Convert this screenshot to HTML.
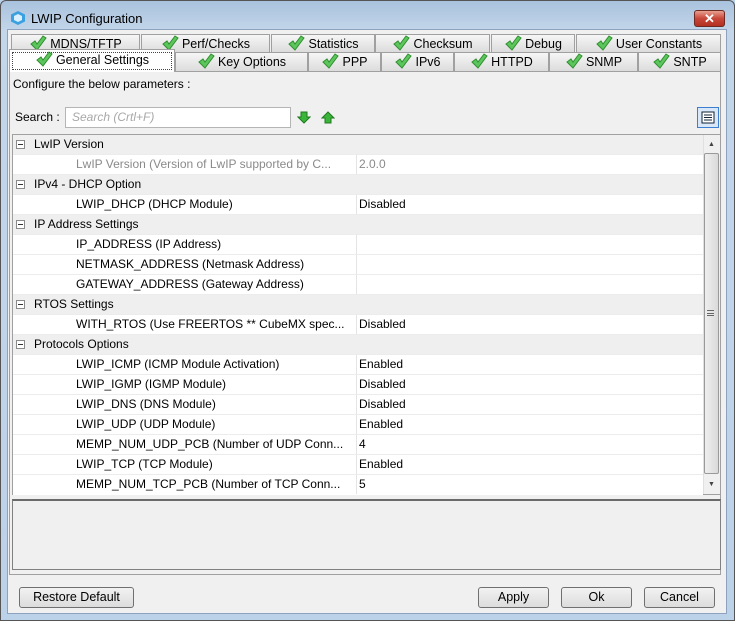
<!DOCTYPE html>
<html><head><meta charset="utf-8"><style>
*{box-sizing:border-box;margin:0;padding:0}
body{width:735px;height:621px;overflow:hidden;background:#b9d1ea;font-family:"Liberation Sans","Noto Sans CJK KR",sans-serif;font-size:12px;color:#000;position:relative}
.abs{position:absolute}
#frame{left:0;top:0;width:735px;height:621px;border:1px solid #555;border-radius:6px 6px 0 0;background:linear-gradient(#a9c2dd 0,#c3d6ea 30px,#bcd2e9 100%)}
#client{left:7px;top:29px;width:720px;height:585px;background:#f0f0f0;border:1px solid #8da3bd}
.tab{position:absolute;height:18px;border:1px solid #a0a0a0;border-bottom:none;background:linear-gradient(#f6f6f6,#dcdcdc);text-align:center;line-height:17px;font-size:12.5px;white-space:nowrap}
.tab svg{vertical-align:-3px;margin-right:3px}
.row{position:absolute;left:13px;width:690px;height:20px;line-height:19px;border-bottom:1px solid #ececec}
.g{background:#efefef}
.w{background:#fff}
.row .n{position:absolute;left:63px}
.row .v{position:absolute;left:346px}
.row .sep{position:absolute;left:343px;top:0;width:1px;height:19px;background:#e4e4e4}
.row .box{position:absolute;left:3px;top:5px;width:9px;height:9px;border:1px solid #8a8a8a;background:#fff}
.row .box:after{content:"";position:absolute;left:1px;top:3px;width:5px;height:1px;background:#333}
.row .gt{position:absolute;left:21px}
.btn{position:absolute;top:587px;height:21px;border:1px solid #707070;border-radius:3px;background:linear-gradient(#f2f2f2,#dcdcdc);text-align:center;line-height:19px;font-size:12.5px}
</style></head><body>
<div id="frame" class="abs"></div>
<svg class="abs" style="left:10px;top:10px" width="16" height="16"><polygon points="8,1 15,4.5 15,11.5 8,15 1,11.5 1,4.5" fill="#3aa0e0"/><polygon points="8,4 12,6 12,10 8,12 4,10 4,6" fill="#d8f0ff"/></svg>
<div class="abs" style="left:31px;top:11px;font-size:13px">LWIP Configuration</div>
<div class="abs" style="left:694px;top:10px;width:31px;height:17px;border:1px solid #6e2a22;border-radius:3px;background:linear-gradient(#e8a090,#c8473a 50%,#b23020);color:#fff;text-align:center;line-height:15px;font-weight:bold;font-size:13px">✕</div>
<div id="client" class="abs"></div>

<svg width="0" height="0" style="position:absolute"><defs><symbol id="ck" viewBox="0 0 18 16"><path d="M2 9 L6 6 L8 9 L14 1 L17 3 L8 15 Z" fill="#5cc65c" stroke="#2f8f2f" stroke-width="1"/></symbol></defs></svg>

<div class="tab" style="left:11px;top:34px;width:129px"><svg width="18" height="16"><use href="#ck"/></svg>MDNS/TFTP</div>
<div class="tab" style="left:141px;top:34px;width:129px"><svg width="18" height="16"><use href="#ck"/></svg>Perf/Checks</div>
<div class="tab" style="left:271px;top:34px;width:104px"><svg width="18" height="16"><use href="#ck"/></svg>Statistics</div>
<div class="tab" style="left:375px;top:34px;width:115px"><svg width="18" height="16"><use href="#ck"/></svg>Checksum</div>
<div class="tab" style="left:491px;top:34px;width:84px"><svg width="18" height="16"><use href="#ck"/></svg>Debug</div>
<div class="tab" style="left:576px;top:34px;width:145px"><svg width="18" height="16"><use href="#ck"/></svg>User Constants</div>
<div class="tab" style="left:175px;top:52px;width:133px;height:19px"><svg width="18" height="16"><use href="#ck"/></svg>Key Options</div>
<div class="tab" style="left:308px;top:52px;width:73px;height:19px"><svg width="18" height="16"><use href="#ck"/></svg>PPP</div>
<div class="tab" style="left:381px;top:52px;width:73px;height:19px"><svg width="18" height="16"><use href="#ck"/></svg>IPv6</div>
<div class="tab" style="left:454px;top:52px;width:95px;height:19px"><svg width="18" height="16"><use href="#ck"/></svg>HTTPD</div>
<div class="tab" style="left:549px;top:52px;width:89px;height:19px"><svg width="18" height="16"><use href="#ck"/></svg>SNMP</div>
<div class="tab" style="left:638px;top:52px;width:83px;height:19px"><svg width="18" height="16"><use href="#ck"/></svg>SNTP</div>
<div class="abs" style="left:9px;top:71px;width:712px;height:504px;border:1px solid #a0a0a0;background:#f0f0f0"></div>
<div class="tab" style="left:9px;top:49px;width:166px;height:23px;background:#fff;line-height:21px;border-bottom:none"><div style="position:absolute;left:2px;top:2px;right:2px;bottom:2px;border:1px dotted #444"></div><svg width="18" height="16"><use href="#ck"/></svg>General Settings</div>

<div class="abs" style="left:13px;top:77px">Configure the below parameters :</div>
<div class="abs" style="left:15px;top:110px">Search :</div>
<div class="abs" style="left:65px;top:107px;width:226px;height:21px;border:1px solid #b5b5b5;background:#fff;color:#a8a8a8;font-style:italic;padding-left:6px;line-height:19px">Search (Crtl+F)</div>
<svg class="abs" style="left:297px;top:111px" width="14" height="13"><path d="M4 1h6v5h3l-6 6-6-6h3z" fill="#3ab53a" stroke="#1f7a1f"/></svg>
<svg class="abs" style="left:321px;top:111px" width="14" height="13"><path d="M4 12h6V7h3L7 1 1 7h3z" fill="#3ab53a" stroke="#1f7a1f"/></svg>
<div class="abs" style="left:697px;top:107px;width:22px;height:21px;border:1px solid #3c7fd0;background:#d8e8f8"></div>
<svg class="abs" style="left:701px;top:111px" width="14" height="13"><rect x="1" y="1" width="12" height="11" fill="#fff" stroke="#123"/><path d="M3 4h8M3 6.5h8M3 9h8" stroke="#123"/></svg>

<div class="abs" style="left:12px;top:134px;width:709px;height:361px;border:1px solid #a0a0a0;background:#fff"></div>
<div class="row g" style="top:135px"><span class="box"></span><span class="gt">LwIP Version</span></div>
<div class="row w" style="top:155px;color:#8a8a8a"><span class="n">LwIP Version (Version of LwIP supported by C...</span><span class="sep"></span><span class="v">2.0.0</span></div>
<div class="row g" style="top:175px"><span class="box"></span><span class="gt">IPv4 - DHCP Option</span></div>
<div class="row w" style="top:195px"><span class="n">LWIP_DHCP (DHCP Module)</span><span class="sep"></span><span class="v">Disabled</span></div>
<div class="row g" style="top:215px"><span class="box"></span><span class="gt">IP Address Settings</span></div>
<div class="row w" style="top:235px"><span class="n">IP_ADDRESS (IP Address)</span><span class="sep"></span></div>
<div class="row w" style="top:255px"><span class="n">NETMASK_ADDRESS (Netmask Address)</span><span class="sep"></span></div>
<div class="row w" style="top:275px"><span class="n">GATEWAY_ADDRESS (Gateway Address)</span><span class="sep"></span></div>
<div class="row g" style="top:295px"><span class="box"></span><span class="gt">RTOS Settings</span></div>
<div class="row w" style="top:315px"><span class="n">WITH_RTOS (Use FREERTOS ** CubeMX spec...</span><span class="sep"></span><span class="v">Disabled</span></div>
<div class="row g" style="top:335px"><span class="box"></span><span class="gt">Protocols Options</span></div>
<div class="row w" style="top:355px"><span class="n">LWIP_ICMP (ICMP Module Activation)</span><span class="sep"></span><span class="v">Enabled</span></div>
<div class="row w" style="top:375px"><span class="n">LWIP_IGMP (IGMP Module)</span><span class="sep"></span><span class="v">Disabled</span></div>
<div class="row w" style="top:395px"><span class="n">LWIP_DNS (DNS Module)</span><span class="sep"></span><span class="v">Disabled</span></div>
<div class="row w" style="top:415px"><span class="n">LWIP_UDP (UDP Module)</span><span class="sep"></span><span class="v">Enabled</span></div>
<div class="row w" style="top:435px"><span class="n">MEMP_NUM_UDP_PCB (Number of UDP Conn...</span><span class="sep"></span><span class="v">4</span></div>
<div class="row w" style="top:455px"><span class="n">LWIP_TCP (TCP Module)</span><span class="sep"></span><span class="v">Enabled</span></div>
<div class="row w" style="top:475px;border-bottom:none"><span class="n">MEMP_NUM_TCP_PCB (Number of TCP Conn...</span><span class="sep"></span><span class="v">5</span></div>
<div class="abs" style="left:703px;top:135px;width:17px;height:359px;background:#f0f0f0;border-left:1px solid #e0e0e0"></div>
<div class="abs" style="left:708px;top:141px;font-size:7px;color:#444">▲</div>
<div class="abs" style="left:708px;top:481px;font-size:7px;color:#444">▼</div>
<div class="abs" style="left:704px;top:153px;width:15px;height:321px;border:1px solid #999;border-radius:2px;background:linear-gradient(90deg,#eee,#dadada)"></div>
<div class="abs" style="left:707px;top:310px;width:7px;height:6px;border-top:1px solid #666;border-bottom:1px solid #666"><div style="margin-top:2px;height:1px;background:#666"></div></div>

<div class="abs" style="left:12px;top:499px;width:709px;height:71px;border:1px solid #808080;border-top:2px solid #6a6a6a;background:#f0f0f0"></div>

<div class="btn" style="left:19px;width:115px">Restore Default</div>
<div class="btn" style="left:478px;width:71px">Apply</div>
<div class="btn" style="left:561px;width:71px">Ok</div>
<div class="btn" style="left:644px;width:71px">Cancel</div>
</body></html>
